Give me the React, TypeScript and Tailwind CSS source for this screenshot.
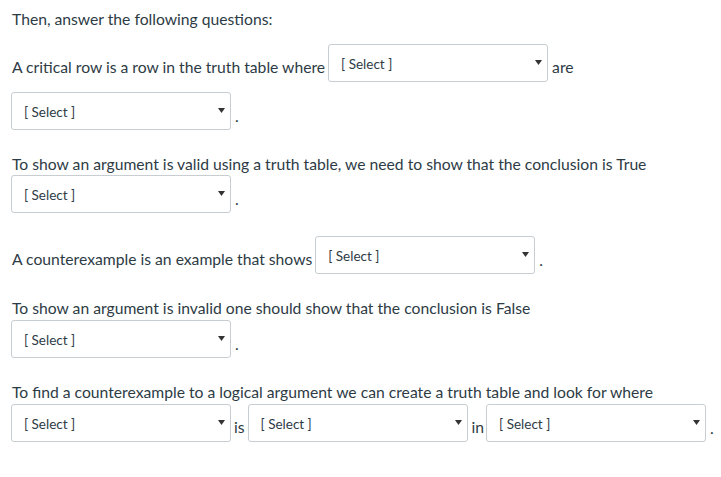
import React from "react";

function Select({ className = "" }: { className?: string }) {
  return (
    <div
      className={`relative flex items-center h-[38px] w-[220px] shrink-0 rounded-[3px] border border-[#c7cdd1] bg-white text-[13.5px] text-[#2d3b45] ${className}`}
    >
      <span className="ml-[12px] pt-[3px]">[ Select ]</span>
      <svg
        className="absolute right-[5px] top-[15px]"
        width="7"
        height="5"
        viewBox="0 0 7 5"
      >
        <path d="M0 0 L7 0 L3.5 5 Z" fill="#333" />
      </svg>
    </div>
  );
}

export default function App() {
  return (
    <div
      className="w-[721px] h-[477px] bg-white text-[#2d3b45] text-[15.7px] pl-[12px]"
      style={{ fontFamily: "Lato, 'Noto Sans', sans-serif" }}
    >
      <div className="pt-[9px] h-[29px] leading-[20px]">Then, answer the following questions:</div>

      {/* critical row */}
      <div className="mt-[15px] flex items-center h-[38px]">
        <span className="leading-[20px] mt-[8px]">A critical row is a row in the truth table where</span>
        <Select className="ml-[3px]" />
        <span className="ml-[4px] leading-[20px] mt-[8px]">are</span>
      </div>
      <div className="mt-[10px] flex items-center h-[38px] -ml-[1px]">
        <Select />
        <span className="ml-[4px] mt-[12px]">.</span>
      </div>

      {/* valid */}
      <div className="mt-[24px] h-[20px] leading-[20px]">
        To show an argument is valid using a truth table, we need to show that the conclusion is True
      </div>
      <div className="mt-[1px] flex items-center h-[38px] -ml-[1px]">
        <Select />
        <span className="ml-[4px] mt-[12px]">.</span>
      </div>

      {/* counterexample */}
      <div className="mt-[23px] flex items-center h-[38px]">
        <span className="leading-[20px] mt-[8px]">A counterexample is an example that shows</span>
        <Select className="ml-[3px]" />
        <span className="ml-[4px] mt-[12px]">.</span>
      </div>

      {/* invalid */}
      <div className="mt-[24px] h-[20px] leading-[20px]">
        To show an argument is invalid one should show that the conclusion is False
      </div>
      <div className="mt-[2px] flex items-center h-[38px] -ml-[1px]">
        <Select />
        <span className="ml-[4px] mt-[12px]">.</span>
      </div>

      {/* find counterexample */}
      <div className="mt-[24px] h-[20px] leading-[20px]">
        To find a counterexample to a logical argument we can create a truth table and look for where
      </div>
      <div className="mt-[2px] flex items-center h-[38px] -ml-[1px]">
        <Select />
        <span className="mx-[3px] leading-[20px] mt-[8px]">is</span>
        <Select />
        <span className="ml-[4px] mr-[2px] leading-[20px] mt-[8px]">in</span>
        <Select />
        <span className="ml-[4px] mt-[12px]">.</span>
      </div>
    </div>
  );
}
